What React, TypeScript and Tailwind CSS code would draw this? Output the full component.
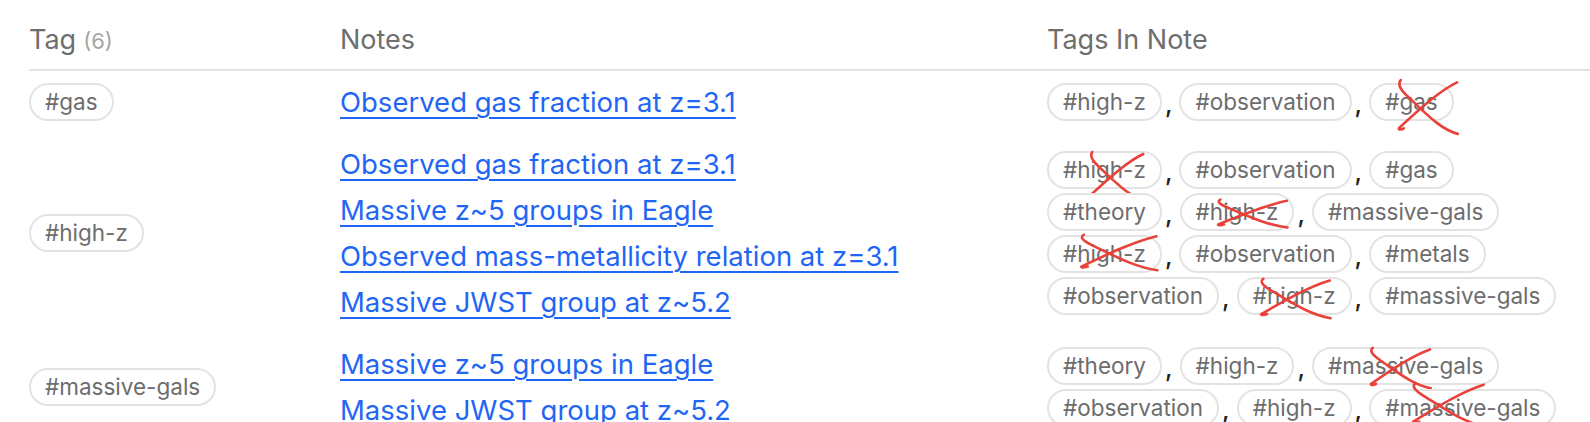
import React, { FC } from 'react'

type TBox = { x: number; y: number; w: number; h: number }

type TNote = {
  title: string
  tags: string[]
  box: TBox
}

type TRow = {
  tag: string
  notes: TNote[]
}

const rows: TRow[] = [
  {
    tag: 'gas',
    notes: [
      {
        title: 'Observed gas fraction at z=3.1',
        tags: ['high-z', 'observation', 'gas'],
        box: { x: 26, y: -6, w: 62, h: 56 },
      },
    ],
  },
  {
    tag: 'high-z',
    notes: [
      {
        title: 'Observed gas fraction at z=3.1',
        tags: ['high-z', 'observation', 'gas'],
        box: { x: 40, y: -2, w: 56, h: 50 },
      },
      {
        title: 'Massive z~5 groups in Eagle',
        tags: ['theory', 'high-z', 'massive-gals'],
        box: { x: 34, y: 4, w: 73, h: 29 },
      },
      {
        title: 'Observed mass-metallicity relation at z=3.1',
        tags: ['high-z', 'observation', 'metals'],
        box: { x: 30, y: -3, w: 80, h: 37 },
      },
      {
        title: 'Massive JWST group at z~5.2',
        tags: ['observation', 'high-z', 'massive-gals'],
        box: { x: 20, y: -1, w: 73, h: 41 },
      },
    ],
  },
  {
    tag: 'massive-gals',
    notes: [
      {
        title: 'Massive z~5 groups in Eagle',
        tags: ['theory', 'high-z', 'massive-gals'],
        box: { x: 55, y: -2, w: 63, h: 42 },
      },
      {
        title: 'Massive JWST group at z~5.2',
        tags: ['observation', 'high-z', 'massive-gals'],
        box: { x: 40, y: -9, w: 75, h: 45 },
      },
    ],
  },
]

// hand drawn red cross over the tag that matches the row
const Cross: FC<{ box: TBox }> = ({ box }) => (
  <svg
    className="pointer-events-none absolute overflow-visible"
    style={{ left: box.x, top: box.y, width: box.w, height: box.h }}
    viewBox="0 0 100 100"
    preserveAspectRatio="none"
    fill="none"
    aria-hidden="true"
  >
    <path
      d="M6 2 C 0 10, 6 20, 20 34 C 45 60, 70 90, 98 98"
      stroke="#e8423a"
      strokeWidth="2.6"
      strokeLinecap="round"
      vectorEffect="non-scaling-stroke"
    />
    <path
      d="M97 6 C 70 20, 40 50, 3 88 C 2 92, 8 90, 11 88"
      stroke="#e8423a"
      strokeWidth="2.6"
      strokeLinecap="round"
      vectorEffect="non-scaling-stroke"
    />
  </svg>
)

const Pill: FC<{ label: string; children?: React.ReactNode }> = ({
  label,
  children,
}) => (
  <span className="relative inline-flex h-[38px] shrink-0 items-center rounded-full border-2 border-[#e3e3e3] bg-white px-[14px] text-[22.5px] leading-[34px] text-[#6d6d6d]">
    #{label}
    {children}
  </span>
)

export default function App() {
  return (
    <div className="min-h-screen overflow-hidden bg-white font-['Inter','Helvetica_Neue',Arial,sans-serif]">
      <div className="ml-[29px]">
        <div className="grid grid-cols-[311px_707px_1fr] border-b-2 border-[#e2e2e2] pt-[22px] pb-[10px] text-[27px] leading-[36px] text-[#6e6e6e]">
          <div className="flex items-baseline">
            Tag
            <span className="ml-[7px] text-[22px] text-[#a5a5a5]">(6)</span>
          </div>
          <div>Notes</div>
          <div>Tags In Note</div>
        </div>

        {rows.map((row) => (
          <div
            key={row.tag}
            className="grid grid-cols-[311px_707px_1fr] items-center py-[8px]"
          >
            <div className="flex">
              <Pill label={row.tag} />
            </div>
            <div className="flex flex-col">
              {row.notes.map((note, i) => (
                <a
                  key={i}
                  href="#"
                  className="self-start text-[27.5px] leading-[46px] text-[#1f66f4] underline decoration-[2px] underline-offset-[5px]"
                >
                  {note.title}
                </a>
              ))}
            </div>
            <div className="flex flex-col gap-[4px]">
              {row.notes.map((note, i) => (
                <div key={i} className="flex items-center">
                  {note.tags.map((t, j) => (
                    <React.Fragment key={t}>
                      <Pill label={t}>
                        {t === row.tag && <Cross box={note.box} />}
                      </Pill>
                      {j < note.tags.length - 1 && (
                        <span className="ml-[3px] mr-[7px] translate-y-[2px] text-[25px] font-medium leading-none text-[#222222]">
                          ,
                        </span>
                      )}
                    </React.Fragment>
                  ))}
                </div>
              ))}
            </div>
          </div>
        ))}
      </div>
    </div>
  )
}
